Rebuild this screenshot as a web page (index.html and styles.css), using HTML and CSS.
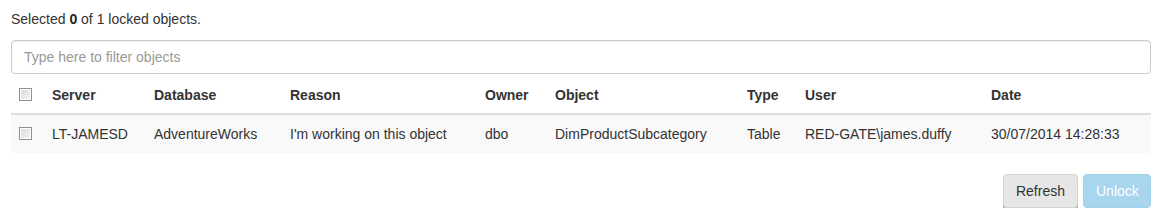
FILE: index.html
```html
<!DOCTYPE html>
<html lang="en">
<head>
  <meta charset="UTF-8" />
  <title>Locked objects</title>
  <link rel="stylesheet" href="styles.css">
</head>
<body>
  <div class="panel">
    <p class="summary">Selected <b>0</b> of 1 locked objects.</p>
    <input class="filter" type="text" placeholder="Type here to filter objects" />

    <table class="locks">
      <thead>
        <tr>
          <th class="c-check"><span class="check"></span></th>
          <th class="c-server">Server</th>
          <th class="c-db">Database</th>
          <th class="c-reason">Reason</th>
          <th class="c-owner">Owner</th>
          <th class="c-object">Object</th>
          <th class="c-type">Type</th>
          <th class="c-user">User</th>
          <th class="c-date">Date</th>
        </tr>
      </thead>
      <tbody>
        <tr>
          <td><span class="check"></span></td>
          <td>LT-JAMESD</td>
          <td>AdventureWorks</td>
          <td>I'm working on this object</td>
          <td>dbo</td>
          <td>DimProductSubcategory</td>
          <td>Table</td>
          <td>RED-GATE\james.duffy</td>
          <td>30/07/2014 14:28:33</td>
        </tr>
      </tbody>
    </table>

    <div class="actions">
      <button class="btn btn-default">Refresh</button>
      <button class="btn btn-primary" disabled>Unlock</button>
    </div>
  </div>
</body>
</html>
```

FILE: styles.css
```css
body {
  margin: 0;
  padding: 10px 10px 0 11px;
  font-family: "Liberation Sans", Arial, sans-serif;
  font-size: 14px;
  color: #333;
  background: white;
}
.summary {
  margin: 0 0 12px;
  line-height: 18px;
}
.summary b {
  color: #222;
}
.filter {
  display: block;
  box-sizing: border-box;
  width: 100%;
  height: 34px;
  padding: 6px 12px;
  font-family: inherit;
  font-size: 14px;
  color: #555;
  border: 1px solid #ccc;
  border-radius: 4px;
  box-shadow: inset 0 1px 1px rgba(0,0,0,0.075);
}
.filter::placeholder {
  color: #999;
}

.locks {
  width: 100%;
  border-collapse: collapse;
  margin-top: 3px;
  table-layout: fixed;
}
.locks th, .locks td {
  padding: 8px;
  text-align: left;
  vertical-align: middle;
  white-space: nowrap;
  line-height: 20px;
}
.locks th {
  font-weight: bold;
  border-bottom: 2px solid #ddd;
  padding-top: 8px;
  padding-bottom: 8px;
}
.locks td {
  background: #f9f9f9;
  padding-top: 9px;
  padding-bottom: 9px;
}
.c-check { width: 17px; }
.c-server { width: 86px; }
.c-db { width: 120px; }
.c-reason { width: 179px; }
.c-owner { width: 54px; }
.c-object { width: 176px; }
.c-type { width: 42px; }
.c-user { width: 170px; }

.check {
  display: inline-block;
  width: 11px;
  height: 11px;
  border: 1px solid #8f8f8f;
  background: linear-gradient(135deg, #d8d8d8, #f6f6f6);
  box-shadow: inset 0 0 0 1px #fff;
  vertical-align: middle;
  position: relative;
  top: -2px;
}

.actions {
  display: flex;
  justify-content: flex-end;
  gap: 5px;
  margin-top: 21px;
}
.btn {
  height: 34px;
  padding: 6px 12px;
  font-family: inherit;
  font-size: 14px;
  border-radius: 4px;
  border: 1px solid transparent;
}
.btn-default {
  color: #333;
  background: #e6e6e6;
  border-color: #d4d4d4;
  box-shadow: 0 2px 0 #adadad;
}
.btn-primary {
  color: #fff;
  background: #a7d6ee;
  border-color: #a0d2ea;
  width: 68px;
}
```
